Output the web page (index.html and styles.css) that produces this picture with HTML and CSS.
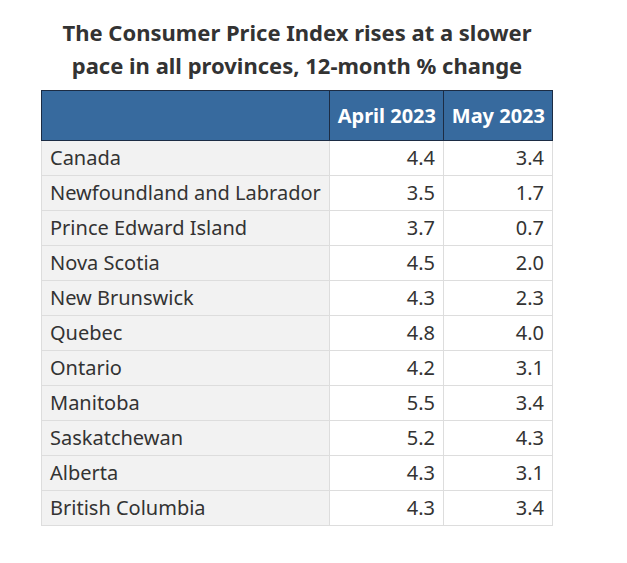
FILE: index.html
```html
<!DOCTYPE html>
<html>
<head>
<meta charset="utf-8">
<link rel="stylesheet" href="styles.css">
</head>
<body>
<div class="wrap">
  <h2 class="title">The Consumer Price Index rises at a slower pace in all provinces, 12-month % change</h2>
  <table class="cpi">
    <thead>
      <tr><th class="blank"></th><th>April 2023</th><th>May 2023</th></tr>
    </thead>
    <tbody>
      <tr><th>Canada</th><td>4.4</td><td>3.4</td></tr>
      <tr><th>Newfoundland and Labrador</th><td>3.5</td><td>1.7</td></tr>
      <tr><th>Prince Edward Island</th><td>3.7</td><td>0.7</td></tr>
      <tr><th>Nova Scotia</th><td>4.5</td><td>2.0</td></tr>
      <tr><th>New Brunswick</th><td>4.3</td><td>2.3</td></tr>
      <tr><th>Quebec</th><td>4.8</td><td>4.0</td></tr>
      <tr><th>Ontario</th><td>4.2</td><td>3.1</td></tr>
      <tr><th>Manitoba</th><td>5.5</td><td>3.4</td></tr>
      <tr><th>Saskatchewan</th><td>5.2</td><td>4.3</td></tr>
      <tr><th>Alberta</th><td>4.3</td><td>3.1</td></tr>
      <tr><th>British Columbia</th><td>4.3</td><td>3.4</td></tr>
    </tbody>
  </table>
</div>
</body>
</html>
```
FILE: styles.css
```css
html, body {
  margin: 0;
  padding: 0;
  background: #ffffff;
}
body {
  font-family: "Noto Sans", "Open Sans", sans-serif;
  color: #333333;
}
.wrap {
  width: 512px;
  margin-left: 41px;
  padding-top: 16px;
}
.title {
  margin: 0 0 8px 0;
  font-size: 22px;
  line-height: 33px;
  font-weight: 700;
  text-align: center;
  color: #333333;
  padding: 0 8px;
}
.cpi {
  width: 512px;
  border-collapse: collapse;
  table-layout: fixed;
  font-size: 20px;
}
.cpi th, .cpi td {
  padding: 0 8px 0 8px;
  line-height: 26px;
  box-sizing: border-box;
  white-space: nowrap;
}
.cpi thead th {
  background: #376a9e;
  color: #ffffff;
  font-weight: 700;
  text-align: right;
  border: 1px solid #1c2c44;
  height: 50px;
  padding: 0 7px 0 0;
}
.cpi thead th.blank { width: 288px; }
.cpi thead th:nth-child(2) { width: 114px; }
.cpi tbody th {
  background: #f2f2f2;
  font-weight: 400;
  text-align: left;
  border: 1px solid #dddddd;
  height: 35px;
}
.cpi tbody td {
  background: #ffffff;
  text-align: right;
  border: 1px solid #dddddd;
  height: 35px;
}
```
